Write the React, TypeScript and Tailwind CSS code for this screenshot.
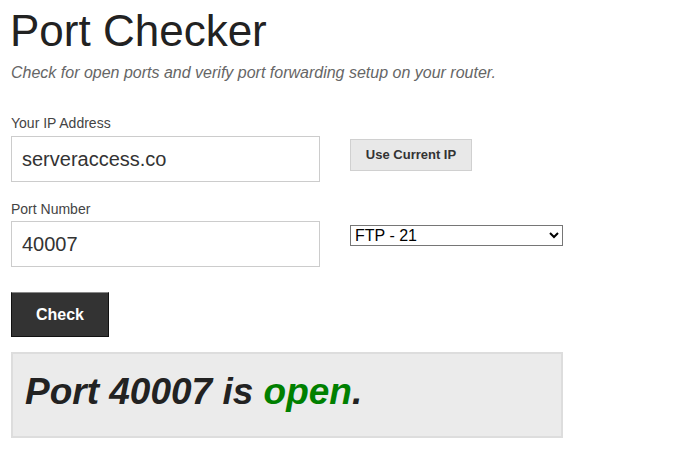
export default function App() {
  return (
    <div className="min-h-screen bg-white pl-[11px] pt-[9px] text-[#333] font-['Liberation_Sans',Arial,sans-serif]">
      <h1 className="text-[44px] leading-[44px] text-[#222] -ml-[1px]">Port Checker</h1>
      <p className="mt-[12px] text-[16px] leading-[16px] italic text-[#666]">
        Check for open ports and verify port forwarding setup on your router.
      </p>

      {/* IP row */}
      <div className="mt-[35px] flex">
        <div className="w-[309px]">
          <label className="block text-[14px] leading-[14px] text-[#444]">Your IP Address</label>
          <input
            type="text"
            defaultValue="serveraccess.co"
            className="mt-[6px] block h-[46px] w-[309px] border border-[#ccc] px-[10px] text-[20px] text-[#333] outline-none"
          />
        </div>
        <div className="pl-[30px] pt-[23px]">
          <button className="h-[32px] w-[122px] border border-[#d0d0d0] bg-[#e8e8e8] text-[13px] font-bold text-[#333]">
            Use Current IP
          </button>
        </div>
      </div>

      {/* Port row */}
      <div className="mt-[20px] flex">
        <div className="w-[309px]">
          <label className="block text-[14px] leading-[14px] text-[#444]">Port Number</label>
          <input
            type="text"
            defaultValue="40007"
            className="mt-[5px] block h-[46px] w-[309px] border border-[#ccc] px-[10px] text-[20px] text-[#333] outline-none"
          />
        </div>
        <div className="pl-[30px] pt-[22px]">
          <select className="h-[21px] w-[213px] border border-[#767676] bg-white text-[16px] text-black" defaultValue="21">
            <option value="21">FTP - 21</option>
            <option value="22">SSH - 22</option>
            <option value="80">HTTP - 80</option>
            <option value="443">HTTPS - 443</option>
          </select>
        </div>
      </div>

      <button className="mt-[25px] block h-[45px] w-[98px] border border-[#111] border-t-[#888] bg-[#333] text-[16px] font-bold text-white">
        Check
      </button>

      <div className="mt-[15px] h-[86px] w-[552px] border-2 border-[#ddd] bg-[#ebebeb] pl-[12px] pt-[19px]">
        <h2 className="text-[37px] leading-[37px] font-bold italic text-[#222]">
          Port 40007 is <span className="text-[#008000]">open</span>.
        </h2>
      </div>
    </div>
  )
}
